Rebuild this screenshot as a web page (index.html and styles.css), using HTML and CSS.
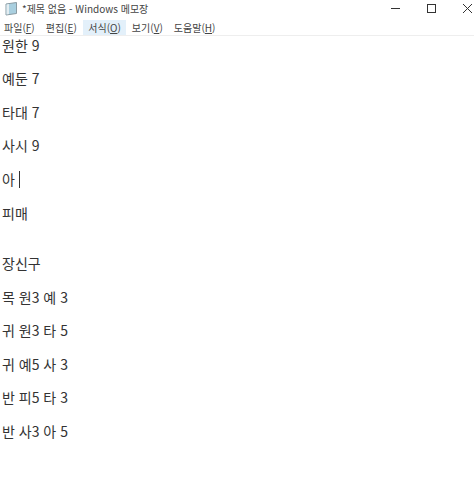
FILE: index.html
```html
<!DOCTYPE html>
<html lang="ko">
  <head>
    <meta charset="UTF-8" />
    <title>*제목 없음 - Windows 메모장</title>
    <link rel="stylesheet" href="styles.css">
  </head>
  <body>
    <div class="titlebar">
      <svg class="app-icon" width="16" height="16" viewBox="0 0 16 16">
        <path d="M3 3 L13.5 1.5 V12.5 L3 14 Z" fill="#a9cfdf" stroke="#8a9ba3" stroke-width="1" />
        <path d="M3.5 3.5 L6 3 V13 L3.5 13.5 Z" fill="#e4edf1" />
      </svg>
      <span class="title">*제목 없음 - Windows 메모장</span>
      <div class="window-buttons">
        <svg width="9" height="9" viewBox="0 0 9 9"><path d="M0 4.5 H9" stroke="#333" stroke-width="1" /></svg>
        <svg width="9" height="9" viewBox="0 0 9 9"><rect x="0.5" y="0.5" width="8" height="8" fill="none" stroke="#333" stroke-width="1" /></svg>
        <svg width="9" height="9" viewBox="0 0 9 9"><path d="M0 0 L9 9 M9 0 L0 9" stroke="#333" stroke-width="1" /></svg>
      </div>
    </div>
    <div class="menubar">
      <span class="menu-item">파일(<u>F</u>)</span>
      <span class="menu-item">편집(<u>E</u>)</span>
      <span class="menu-item active">서식(<u>O</u>)</span>
      <span class="menu-item">보기(<u>V</u>)</span>
      <span class="menu-item">도움말(<u>H</u>)</span>
    </div>
    <div class="editor">
      <div>원한 9</div>
      <div class="blank"></div>
      <div>예둔 7</div>
      <div class="blank"></div>
      <div>타대 7</div>
      <div class="blank"></div>
      <div>사시 9</div>
      <div class="blank"></div>
      <div>아 <span class="caret"></span></div>
      <div class="blank"></div>
      <div>피매</div>
      <div class="blank"></div>
      <div class="blank"></div>
      <div>장신구</div>
      <div class="blank"></div>
      <div>목 원3 예 3</div>
      <div class="blank"></div>
      <div>귀 원3 타 5</div>
      <div class="blank"></div>
      <div>귀 예5 사 3</div>
      <div class="blank"></div>
      <div>반 피5 타 3</div>
      <div class="blank"></div>
      <div>반 사3 아 5</div>
    </div>
  </body>
</html>
```

FILE: styles.css
```css
html,
body {
  margin: 0;
  padding: 0;
  width: 100%;
  height: 100%;
  background-color: #fff;
  color: #333;
  font-family: "Noto Sans CJK KR", "Liberation Sans", sans-serif;
  overflow: hidden;
}

.titlebar {
  display: flex;
  align-items: center;
  height: 17px;
  padding-left: 3px;
}

.app-icon {
  flex: none;
}

.title {
  margin-left: 3px;
  font-size: 10px;
  color: #444;
}

.window-buttons {
  display: flex;
  gap: 27px;
  margin-left: auto;
  padding-right: 2px;
}

.menubar {
  display: flex;
  align-items: center;
  height: 16px;
  margin-top: 2px;
  border-bottom: 1px solid #eee;
  font-size: 10px;
  color: #444;
}

.menu-item {
  padding: 0 5.5px 0 4px;
  margin-right: 1.5px;
  line-height: 15px;
}

.menu-item.active {
  background-color: #e3f0fa;
  padding: 0 5.5px;
  margin-left: -1px;
}

.editor {
  padding: 0.5px 0 0 2px;
  font-size: 14px;
  line-height: 16.8px;
}

.blank {
  height: 16.8px;
}

.caret {
  display: inline-block;
  width: 1px;
  height: 17px;
  background-color: #333;
  vertical-align: -3px;
}
```
